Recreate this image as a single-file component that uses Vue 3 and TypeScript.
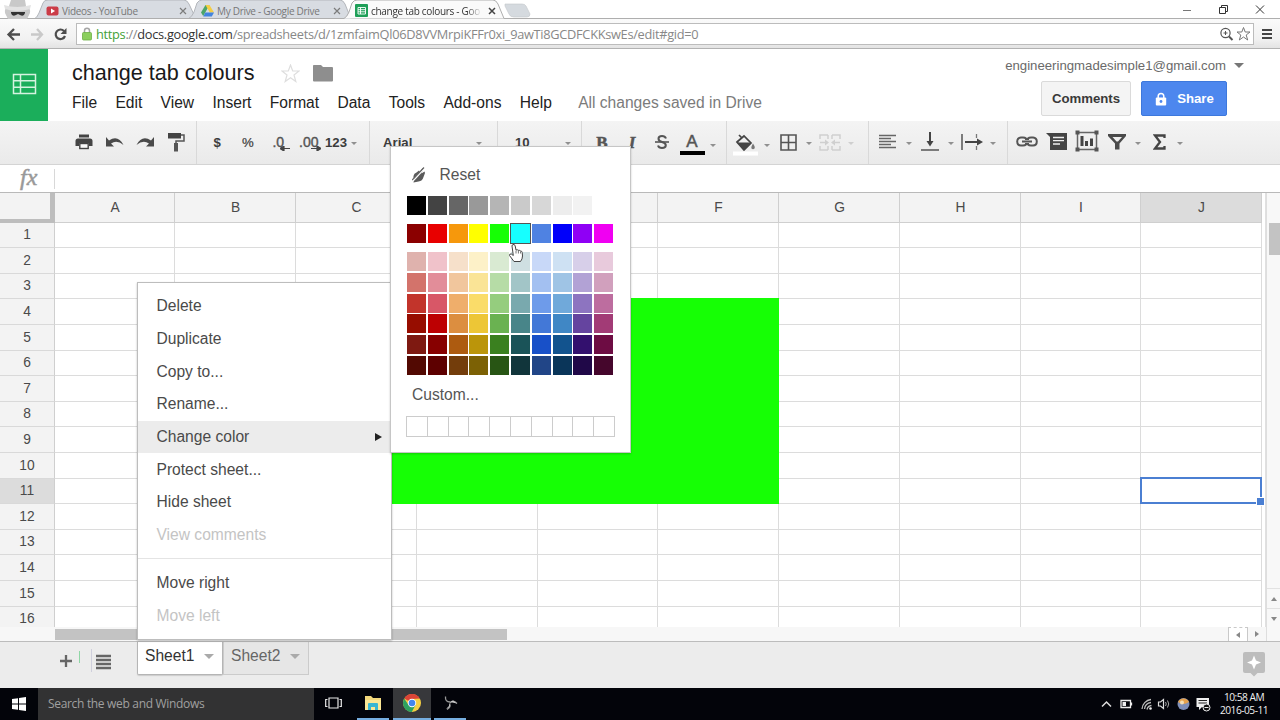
<script setup lang="ts">
interface MenuItem { label: string; disabled?: boolean; active?: boolean }

const menus = ['File', 'Edit', 'View', 'Insert', 'Format', 'Data', 'Tools', 'Add-ons', 'Help']
const columns = ['A', 'B', 'C', 'D', 'E', 'F', 'G', 'H', 'I', 'J']
const rows = Array.from({ length: 16 }, (_, i) => i + 1)

const isFilled = (r: number, c: number): boolean => r >= 4 && r <= 11 && c >= 2 && c <= 5

const firstItems: MenuItem[] = [
  { label: 'Delete' },
  { label: 'Duplicate' },
  { label: 'Copy to...' },
  { label: 'Rename...' },
  { label: 'Change color', active: true },
  { label: 'Protect sheet...' },
  { label: 'Hide sheet' },
  { label: 'View comments', disabled: true },
]
const lastItems: MenuItem[] = [{ label: 'Move right' }, { label: 'Move left', disabled: true }]

const palettes: string[][][] = [
  [['#000000', '#434343', '#666666', '#999999', '#b5b5b5', '#cacaca', '#d7d7d7', '#ededed', '#f2f2f2', '#ffffff']],
  [['#8b0000', '#e80000', '#f6980c', '#ffff00', '#16ff05', '#16ffff', '#4f82e2', '#0000fa', '#8f00f5', '#f000f2']],
  [
    ['#dfb2ad', '#f0c2ca', '#f6e0ca', '#fdf1c8', '#d9ead2', '#cfdfe2', '#c8d8f8', '#cee1f3', '#d7cfe9', '#e8cadc'],
    ['#d3736b', '#e28d99', '#f1c69d', '#fae496', '#b6dca6', '#a2c5c7', '#a3c0f1', '#9fc4e5', '#b2a2d5', '#d1a0bd'],
    ['#c2342b', '#d85767', '#efae6b', '#fadc69', '#95cd7e', '#79a9ae', '#6e9bea', '#70a9da', '#8d74c0', '#bd6d9f'],
    ['#970d00', '#bd0002', '#dc8e40', '#edc636', '#6ab251', '#488589', '#4378d7', '#4087c5', '#65449f', '#a23b76'],
    ['#7e1911', '#870000', '#ad5b10', '#bb950a', '#3a801f', '#1a5358', '#1850c8', '#12538e', '#33106e', '#6d0c43'],
    ['#520902', '#5d0000', '#733d0b', '#7c6105', '#285514', '#11353b', '#214587', '#0a3559', '#200848', '#45062c'],
  ],
]
const isHovered = (g: number, c: number): boolean => g === 1 && c === 5
</script>

<template>
  <div class="screen">
    <div class="tabstrip">
      <svg class="tabshapes" width="540" height="19">
        <path d="M34 19 Q37 18 39 13 L43 3 Q44 0 48 0 H184 Q187 0 189 4 L196 19Z" fill="#d8dce2" stroke="#b3b6bb" />
        <path d="M188 19 Q192 17 194 12 L197 3 Q199 0 202 0 H340 Q343 0 345 4 L351 19Z" fill="#d8dce2" stroke="#b3b6bb" />
        <path d="M505 4 H522 Q525 4 526 6 L530 14 Q530 17 527 17 H514 Q510 17 509 14 L505 6Z" fill="#d5dadf" stroke="#c3c6ca" stroke-width=".6" />
        <path d="M0 18.500H344 Q347 17 349 12 L352 3 Q354 0 357 0 H493 Q496 0 498 4 L504 18.500H540" fill="#fafafa" stroke="#aeaeae" />
        <path d="M11 0 H25 L26 6 Q31 8 30 13 L27 19 H8 L5 13 Q4 8 9 6Z" fill="#c9c9c9" />
        <path d="M4 5 Q17 9 31 5 L30 9 Q17 13 5 9Z" fill="#e3e3e3" />
        <path d="M11 12 H25 V13 Q24 17 20 15 L18 14 L16 15 Q12 17 11 13Z" fill="#333" />
      </svg>
      <div class="tab first">
        <svg width="13" height="10"><rect x=".500" y=".500" width="12" height="9" rx="2" fill="#cb3c48" /><path d="M5 2.500 9 5 5 7.500Z" fill="#fff" /></svg>
        <span>Videos - YouTube</span>
        <svg class="x" width="8" height="8"><path d="M1 1 7 7M7 1 1 7" stroke="#7c7c7c" stroke-width="1.200" /></svg>
      </div>
      <div class="tab second">
        <svg width="13" height="12"><path d="M4.500 0H8.500L4.300 7.500 2.200 11 0 7.500Z" fill="#4ba568" /><path d="M4.500 0H8.500L13 7.500H8.800Z" fill="#f4cd43" /><path d="M4.300 7.500H13L10.800 11.500H2.200Z" fill="#4384de" /></svg>
        <span>My Drive - Google Drive</span>
        <svg class="x" width="8" height="8"><path d="M1 1 7 7M7 1 1 7" stroke="#7c7c7c" stroke-width="1.200" /></svg>
      </div>
      <div class="tab third">
        <svg width="13" height="13"><rect width="13" height="13" rx="1" fill="#1f9f58" /><path d="M3 3.500H10.500V10H3ZM3 5.700H10.500M3 7.800H10.500M5.500 3.500V10" fill="none" stroke="#fff" stroke-width=".9" /></svg>
        <span class="fade">change tab colours - Goo</span>
        <svg class="x" width="8" height="8"><path d="M1 1 7 7M7 1 1 7" stroke="#444" stroke-width="1.500" /></svg>
      </div>
      <svg class="winctl" width="86" height="19">
        <path d="M5 10.500H13" stroke="#777" />
        <path d="M41.500 7.500H47.500V13.500H41.500ZM43.500 7.500V5.500H49.500V11.500H47.500" fill="none" stroke="#333" />
        <path d="M78 5.500 86 13.500M86 5.500 78 13.500" stroke="#333" />
      </svg>
    </div>

    <div class="addressbar">
      <svg class="nav" width="72" height="28">
        <path d="M20 14.500H9M14 9 8.500 14.500 14 20" fill="none" stroke="#4d4d4d" stroke-width="2.300" />
        <path d="M31 14.500H41M37 9 42 14.500 37 20" fill="none" stroke="#c9c9c9" stroke-width="2.300" />
        <path d="M64 11A4.800 4.800 0 1 0 65 16" fill="none" stroke="#4d4d4d" stroke-width="2.200" /><path d="M66.500 8V14H60.500Z" fill="#4d4d4d" />
      </svg>
      <div class="omnibox">
        <svg width="12" height="14"><path d="M3.500 6V3.800A2.500 2.500 0 0 1 8.500 3.800V6" fill="none" stroke="#a5a5a5" stroke-width="1.500" /><rect x="1.500" y="5.500" width="9" height="7.500" rx="1" fill="#8ccf5e" stroke="#6dae45" stroke-width=".8" /></svg>
        <span class="url"><i>https</i>://<b>docs.google.com</b>/spreadsheets/d/1zmfaimQl06D8VVMrpiKFFr0xi_9awTi8GCDFCKKswEs/edit#gid=0</span>
        <svg class="zoomstar" width="34" height="16">
          <circle cx="7.500" cy="7" r="4.600" fill="none" stroke="#555" stroke-width="1.200" /><path d="M11 10.500 14.500 14" stroke="#555" stroke-width="2" /><path d="M5.500 7H9.500M7.500 5V9" stroke="#555" />
          <path d="M25.500 1.500 27.200 6H32L28.200 9 29.700 14 25.500 11 21.300 14 22.800 9 19 6H23.800Z" fill="none" stroke="#777" />
        </svg>
      </div>
      <svg class="burger" width="12" height="12"><path d="M1 2H11M1 6H11M1 10H11" stroke="#444" stroke-width="2.100" /></svg>
    </div>

    <header class="dochead">
      <div class="logo"><svg width="25" height="22"><path d="M1.500 1.500H23.500V20.500H1.500ZM1.500 7.800H23.500M1.500 14.200H23.500M8.500 1.500V20.500" fill="none" stroke="#d5f3e0" stroke-width="1.500" /></svg></div>
      <div class="docmain">
        <div class="titlerow">
          <span class="title">change tab colours</span>
          <svg class="star" width="19" height="19"><path d="M9.500 1 11.700 7H18L13 11 14.800 17.500 9.500 13.700 4.200 17.500 6 11 1 7H7.300Z" fill="none" stroke="#dedede" stroke-width="1.200" /></svg>
          <svg class="folder" width="20" height="18"><path d="M0 1.500Q0 1 1 1H8L10 3H19Q20 3 20 4V16.500Q20 17.500 19 17.500H1Q0 17.500 0 16.500Z" fill="#8e8e8e" /></svg>
        </div>
        <nav class="menubar"><span v-for="m in menus" :key="m">{{ m }}</span><span class="saved">All changes saved in Drive</span></nav>
      </div>
      <div class="account">
        <div class="email">engineeringmadesimple1@gmail.com<em class="down" /></div>
        <div class="buttons">
          <div class="btn">Comments</div>
          <div class="btn share"><svg width="12" height="14"><path d="M3.200 6V4.200A2.700 2.700 0 0 1 8.800 4.200V6" fill="none" stroke="#fff" stroke-width="1.500" /><rect x=".8" y="5.500" width="10.400" height="8" rx="1" fill="#fff" /><circle cx="6" cy="9.500" r="1.400" fill="#4d87ee" /></svg>Share</div>
        </div>
      </div>
    </header>

    <div class="toolbar">
      <div class="group g1">
        <div class="slot"><svg width="18" height="16"><path d="M4 0.500H14V3.500H4ZM3 4.500H15Q17.500 4.500 17.500 7V12H14V9H4V12H.5V7Q.5 4.500 3 4.500Z" fill="#444" /><rect x="4.800" y="9.500" width="8.400" height="5" fill="#fafafa" stroke="#444" stroke-width="1.400" /></svg></div>
        <div class="slot"><svg width="20" height="12"><path d="M1 1V10.500H9L6 7.500Q12 3.500 18.500 9Q13-1.500 4 4.500Z" fill="#4a4a4a" /></svg></div>
        <div class="slot"><svg width="20" height="12"><path d="M19 1V10.500H11L14 7.500Q8 3.500 1.500 9Q7-1.500 16 4.500Z" fill="#4a4a4a" /></svg></div>
        <div class="slot"><svg width="18" height="20"><path d="M1 1H14V6.500H1Z" fill="#444" /><path d="M14 3H17V9H9V12" fill="none" stroke="#555" stroke-width="1.500" /><path d="M7 11H11V19.500H7Z" fill="#555" /></svg></div>
      </div>
      <div class="group g2">
        <div class="slot">$</div><div class="slot thin">%</div>
        <div class="slot dec"><span>.0</span><svg width="10" height="5"><path d="M10 2.500H3M4 0 0 2.500 4 5Z" fill="#444" stroke="#444" stroke-width="1.200" /></svg></div>
        <div class="slot dec"><span>.00</span><svg width="10" height="5"><path d="M0 2.500H7M6 0 10 2.500 6 5Z" fill="#444" stroke="#444" stroke-width="1.200" /></svg></div>
        <div class="num">123<em class="caret" /></div>
      </div>
      <div class="group g3"><span>Arial</span><em class="caret" /></div>
      <div class="group g4"><span>10</span><em class="caret" /></div>
      <div class="group g5">
        <div class="slot serif">B</div><div class="slot serif ital">I</div>
        <div class="slot"><svg width="16" height="16"><path d="M12 4.500Q11 2 8 2Q4.500 2 4.500 4.700Q4.500 7 8 8Q11.800 9 11.800 11.200Q11.800 14 8 14Q4.800 14 4 11.500" fill="none" stroke="#555" stroke-width="2" /><path d="M1 8H15" stroke="#555" stroke-width="1.600" /></svg></div>
        <div class="slot acolor"><span>A</span><u /></div>
        <em class="caret low" />
      </div>
      <div class="group g6">
        <div class="slot"><svg class="fillsvg" width="26" height="23"><path d="M6 2 9 5M4 9 11 3 18 10 11 17Z" fill="none" stroke="#444" stroke-width="1.700" /><path d="M4 9.500H18L11 17Z" fill="#444" /><path d="M20 10.500Q22.500 14 21.500 15.500Q20 17 18.500 15.500Q17.800 14 20 10.500Z" fill="#777" /><rect x="0" y="18.500" width="25" height="4" fill="#fff" /></svg></div><em class="caret low" />
        <div class="slot"><svg width="17" height="17"><path d="M1 1H16V16H1ZM1 8.500H16M8.500 1V16" fill="none" stroke="#555" stroke-width="1.600" /></svg></div><em class="caret" />
        <div class="slot"><svg width="22" height="17"><path d="M9 1H1V5M13 1H21V5M9 16H1V12M13 16H21V12M9 1V5M13 1V5M9 12V16M13 12V16M1 8.500H7M15 8.500H21" fill="none" stroke="#cfcfcf" stroke-width="1.500" /><path d="M6 5.500 10 8.500 6 11.500ZM16 5.500 12 8.500 16 11.500Z" fill="#cfcfcf" /></svg></div><em class="caret pale" />
      </div>
      <div class="group g7">
        <div class="slot"><svg width="18" height="16"><path d="M0 1.500H17M0 4.500H12M0 7.500H17M0 10.500H12M0 13.500H17" stroke="#666" stroke-width="1.500" /></svg></div><em class="caret" />
        <div class="slot"><svg width="20" height="20"><path d="M10 0V10" stroke="#444" stroke-width="2" /><path d="M6.500 9H13.500L10 14.500Z" fill="#444" /><path d="M1 18H19" stroke="#555" stroke-width="1.500" /></svg></div><em class="caret" />
        <div class="slot"><svg width="22" height="18"><path d="M1 1V17" stroke="#555" stroke-width="1.500" /><path d="M15.500 1V5M15.500 13V17" stroke="#777" stroke-width="1.300" /><path d="M4 9H17" stroke="#444" stroke-width="2" /><path d="M16 5.500 22 9 16 12.500Z" fill="#444" /></svg></div><em class="caret" />
      </div>
      <div class="group g8">
        <div class="slot"><svg width="22" height="12"><path d="M10 4V2.500Q9 1.500 7 1.500H5Q1.200 2 1.200 5.500Q1.200 9.500 5 9.500H7Q9 9.500 10 8.500V7M12 4V2.500Q13 1.500 15 1.500H17Q20.800 2 20.800 5.500Q20.800 9.500 17 9.500H15Q13 9.500 12 8.500V7M6 5.500H16" fill="none" stroke="#555" stroke-width="2" /></svg></div>
        <div class="slot up"><svg width="22" height="19"><path d="M0 1H21V18H4V5Z" fill="#444" /><path d="M7 5.500H18M7 8.700H18M7 12H14" stroke="#eee" stroke-width="1.300" /></svg></div>
        <div class="slot up"><svg width="24" height="22"><path d="M2.500 2.500H21.500V19.500H2.500Z" fill="none" stroke="#666" stroke-width="1.500" /><path d="M.5.500H4.500V4.500H.5ZM19.500.500H23.500V4.500H19.500ZM.5 17.500H4.500V21.500H.5ZM19.500 17.500H23.500V21.500H19.500Z" fill="#555" /><path d="M5.500 16V6H8.500V16ZM10 16V11H13V16ZM15 16V8.500H18V16Z" fill="#444" /></svg></div>
        <div class="slot"><svg width="18" height="16"><path d="M0 0H18V2L11.500 9.500V15.500H7V9.500L0 2ZM4.500 3 8.500 7.500H10L14 3Z" fill="#4a4a4a" fill-rule="evenodd" /></svg></div><em class="caret" />
        <div class="slot"><svg width="13" height="16"><path d="M11.500 4V1.500H2L7 8 2 14.500H11.500V12" fill="none" stroke="#444" stroke-width="2.300" /></svg></div><em class="caret" />
      </div>
    </div>

    <div class="formula"><span class="fx">fx</span><i /></div>

    <div class="sheet">
      <div class="gridwrap">
        <div class="grid">
          <div class="corner" />
          <div v-for="(c, i) in columns" :key="c" class="colhead" :class="{ sel: i === 9 }">{{ c }}</div>
          <template v-for="r in rows" :key="r">
            <div class="rowhead" :class="{ sel: r === 11 }">{{ r }}</div>
            <div v-for="(c, i) in columns" :key="c" class="cell" :class="{ fill: isFilled(r, i), cursor: r === 11 && i === 9 }"><i v-if="r === 11 && i === 9" /></div>
          </template>
        </div>
        <div class="hscroll">
          <div class="hthumb" />
          <div class="harrows"><span class="box"><em class="al" /></span><span><em class="ar" /></span></div>
        </div>
      </div>
      <div class="vscroll"><div class="vthumb" /><div class="varrows"><span><em class="au" /></span><span><em class="ad" /></span></div></div>
    </div>

    <div class="sheetbar">
      <svg class="plus" width="14" height="14"><path d="M7 1V13M1 7H13" stroke="#666" stroke-width="2.300" /></svg>
      <i class="g" /><i class="v" />
      <svg class="list" width="16" height="16"><path d="M0 2H15M0 6H15M0 10H15M0 14H15" stroke="#666" stroke-width="2.300" /></svg>
      <div class="stab on">Sheet1<em class="down" /></div>
      <div class="stab">Sheet2<em class="down" /></div>
      <svg class="explore" width="22" height="26"><path d="M2 1H20Q22 1 22 3V20Q22 22 20 22H14.500L11 25.500 7.500 22H2Q0 22 0 20V3Q0 1 2 1Z" fill="#bdbdbd" /><path d="M11 4.500 13 9.500 18 11.500 13 13.500 11 18.500 9 13.500 4 11.500 9 9.500Z" fill="#fff" /></svg>
    </div>

    <div class="taskbar">
      <div class="start"><svg width="14" height="14"><path d="M0 2 6 1.200V6.500H0ZM7 1 14 0V6.500H7ZM0 7.500H6V12.800L0 12ZM7 7.500H14V14L7 13Z" fill="#fff" /></svg></div>
      <div class="search">Search the web and Windows</div>
      <div class="app"><svg width="17" height="14"><path d="M4 2H13V12H4ZM2.500 3.500H.7V10.500H2.500M14.500 3.500H16.300V10.500H14.500" fill="none" stroke="#e8e8e8" stroke-width="1.200" /></svg></div>
      <div class="app run"><svg width="18" height="16"><path d="M1 1H7L9 3H17V15H1Z" fill="#f3d97d" /><path d="M1 5H17V15H1Z" fill="#fbe795" /><path d="M4 15V9Q4 8 5 8H13Q14 8 14 9V15H11V12H7V15Z" fill="#38b6d3" /></svg></div>
      <div class="app run cur"><svg width="18" height="18" viewBox="0 0 18 18"><circle cx="9" cy="9" r="9" fill="#f5cf43" /><path d="M9 9 1.200 4.500A9 9 0 0 1 16.800 4.500L9 5Z" fill="#db4437" /><path d="M1.200 4.500A9 9 0 0 0 8.800 18L12.500 11 9 9 5.500 11Z" fill="#2da160" /><circle cx="9" cy="9" r="4.200" fill="#fff" /><circle cx="9" cy="9" r="3.300" fill="#4386ee" /></svg></div>
      <div class="app run"><svg width="16" height="16"><path d="M8 7Q3 7 3.500 1.500M8 8Q11 4 15 8.500M7.500 8.500Q9.500 12 5 14.500" fill="none" stroke="#999" stroke-width="1.300" /><path d="M7.500 8.500Q9.500 12 4 14L7 11ZM8 7 11 5.500 15 8.500Z" fill="#ccc" /></svg></div>
      <div class="tray">
        <svg width="110" height="16">
          <path d="M1 10.500 5.500 6 10 10.500" fill="none" stroke="#ddd" stroke-width="1.500" />
          <path d="M20 4.500H29.500V11.500H20ZM30.500 6.500V9.500" fill="none" stroke="#eee" stroke-width="1.300" /><path d="M21.500 6H25V10H21.500Z" fill="#eee" />
          <path d="M41 13A10 10 0 0 1 50 3.500M43.500 13A7.500 7.500 0 0 1 50 6.500M46 13.500A5 5 0 0 1 50.500 9.500" fill="none" stroke="#bbb" stroke-width="1.300" /><circle cx="49.500" cy="12.500" r="1.300" fill="#eee" />
          <path d="M57.500 6H59.500L62.500 3.500V12.500L59.500 10H57.500Z" fill="none" stroke="#ddd" stroke-width="1.200" /><path d="M64.500 6Q66 8 64.500 10M66.500 4.500Q69 8 66.500 11.500" fill="none" stroke="#aaa" />
          <circle cx="82.500" cy="8" r="6" fill="#7f8fb8" /><path d="M77 6A6 6 0 0 1 88 6Q82 10 77 6Z" fill="#e7a24b" /><circle cx="81" cy="6.500" r="2" fill="#f4dfb5" />
          <path d="M95.500 2H108V11H101L98 14V11H95.500Z" fill="#eee" /><path d="M97.500 4.500H106M97.500 7H106" stroke="#222" /><circle cx="105.500" cy="11.500" r="3.500" fill="#111" stroke="#eee" /><path d="M103.500 11.500H107.500" stroke="#eee" />
        </svg>
        <div class="clock"><span>10:58 AM</span><span>2016-05-11</span></div>
      </div>
    </div>

    <div class="ctxmenu">
      <div v-for="m in firstItems" :key="m.label" class="item" :class="{ dis: m.disabled, act: m.active }">{{ m.label }}<em v-if="m.active" /></div>
      <hr>
      <div v-for="m in lastItems" :key="m.label" class="item" :class="{ dis: m.disabled }">{{ m.label }}</div>
    </div>

    <div class="picker">
      <div class="reset"><svg width="14" height="16"><path d="M1.500 15.500 1.500 9Q2 6 4.500 5.500L7 3.500 8 5 10.500 1 11.500 2 9.500 6.500 12.500 4.500 13 6 11.500 10Q10.500 14 6.500 14.500Z" fill="#5a5a5a" /><path d="M13 1 .5 14.500" stroke="#fff" stroke-width="1.300" /><path d="M12 .5 0 13" stroke="#666" stroke-width="1.200" /></svg>Reset</div>
      <div v-for="(p, g) in palettes" :key="g" class="palette">
        <template v-for="(line, l) in p" :key="l">
          <i v-for="(c, k) in line" :key="k" :class="{ hov: isHovered(g, k) }" :style="{ background: c }" />
        </template>
      </div>
      <div class="custom">Custom...</div>
      <div class="blank"><i v-for="n in 10" :key="n" /></div>
    </div>

    <svg class="pointer" width="16" height="21"><path d="M5 1.500Q6.800 1 7.200 3L8 7Q9.500 6.300 10.300 7.300Q11.800 6.800 12.300 8Q14 7.800 14.200 9.500L14.500 13Q14.500 16 12.500 18.500H6L1.500 12.500Q1.300 10.500 3.300 11L5.300 12.500 4 3Q4 1.800 5 1.500Z" fill="#fff" stroke="#444" stroke-width="1" /><path d="M8 7.500V10.500M10.400 7.500V10.500M12.500 8.500V10.500" stroke="#555" stroke-width=".8" /></svg>
  </div>
</template>

<style>
html, body { overflow: hidden; background: #fff; }
</style>
<style scoped>
* { box-sizing: border-box; }
i, em { font-style: normal; }
svg { display: block; flex: none; }
.screen { position: relative; width: 1280px; height: 720px; overflow: hidden; display: flex; flex-direction: column; font-family: "Liberation Sans", Arial, sans-serif; color: #222; background: #fff; }
.screen > div, .screen > header { flex: none; }

.tabstrip { height: 19px; position: relative; display: flex; border-bottom: 1px solid #aeaeae; font-family: "Open Sans", sans-serif; font-size: 10px; letter-spacing: -.3px; color: #777; }
.tabshapes { position: absolute; left: 0; top: 0; }
.tab { position: relative; display: flex; align-items: center; height: 21px; white-space: nowrap; }
.tab span { margin-left: 3px; }
.tab .x { margin-left: auto; }
.first { margin-left: 46px; width: 141px; }
.second { margin-left: 14px; width: 140px; }
.third { margin-left: 14px; width: 141px; color: #333; }
.third .fade { width: 111px; overflow: hidden; mask-image: linear-gradient(90deg, #000 86%, transparent); }
.winctl { margin-left: auto; margin-right: 16px; overflow: visible; }

.addressbar { height: 30px; display: flex; align-items: center; background: linear-gradient(#fafafa, #f1f1f1 70%, #e3e3e3); border-bottom: 1px solid #b2b2b2; }
.omnibox { height: 22px; margin-left: 4px; width: 1178px; border: 1px solid #bcbcbc; background: #fff; display: flex; align-items: center; padding-left: 4px; }
.nav { margin-top: 1px; }
.url { margin-left: 3px; font: 12.800px/20px "Open Sans", sans-serif; letter-spacing: -.3px; color: #888; white-space: nowrap; }
.url i { color: #43a035; }
.url b { font-weight: 400; color: #333; }
.zoomstar { margin-left: auto; margin-right: 1px; }
.burger { margin-left: 7px; }

.dochead { height: 72px; display: flex; }
.logo { width: 48px; background: #1bae5b; padding: 24px 0 0 12px; }
.docmain { padding-left: 24px; }
.titlerow { display: flex; align-items: center; height: 46px; padding-top: 2px; }
.title { font-size: 21.6px; color: #1a1a1a; width: 182px; white-space: nowrap; }
.star { margin-left: 27px; }
.folder { margin-left: 13px; }
.menubar { display: flex; gap: 18.300px; font-size: 15.600px; line-height: 18px; margin-top: -1px; white-space: nowrap; }
.menubar .saved { color: #7b7b7b; margin-left: 8px; }
.account { margin-left: auto; padding-right: 36px; }
.email { display: flex; align-items: center; justify-content: flex-end; gap: 8px; font-size: 13.200px; color: #6a6a6a; height: 32px; }
.down { border: 5px solid transparent; border-top-color: #777; border-bottom: 0; }
.buttons { display: flex; justify-content: flex-end; gap: 10px; padding-right: 17px; }
.btn { height: 35px; width: 90px; border: 1px solid #dadada; border-radius: 2px; background: #f4f4f4; color: #3a3a3a; font-weight: 700; font-size: 13.200px; display: flex; align-items: center; justify-content: center; }
.share { width: 86px; background: #4d87ee; border-color: #3d78dc; color: #fff; gap: 10px; padding-left: 1px; }

.toolbar { height: 44px; display: flex; background: linear-gradient(#f4f4f4, #eaeaea); border-bottom: 1px solid #d4d4d4; font-size: 13.200px; font-weight: 700; color: #3c3c3c; }
.group { display: flex; align-items: center; height: 43px; border-right: 1px solid #d9d9d9; flex: none; }
.slot { width: 30.500px; height: 30px; display: flex; align-items: center; justify-content: center; flex: none; }
.slot svg { margin-top: -1px; }
.caret { border: 3.500px solid transparent; border-top-color: #909090; border-bottom: 0; margin: 1px 3px 0; flex: none; }
.low { margin-top: 5px; }
.g1 { width: 197px; padding-left: 69px; }
.g2 { width: 173px; padding-left: 5px; }
.g3 { width: 128px; padding: 0 12px 0 13px; justify-content: space-between; }
.g4 { width: 84px; padding: 0 7px 0 17px; justify-content: space-between; }
.g5 { width: 145px; padding-left: 5px; }
.g6 { width: 142px; padding-left: 4px; }
.g7 { width: 139px; padding-left: 4px; }
.g8 { padding-left: 4px; border: 0; }
.g5 .slot { width: 30px; }
.g6 .slot, .g7 .slot, .g8 .slot { width: 30px; }
.g7 .slot svg { margin-top: -2px; }
.slot.up svg { margin-top: -3px; }
.thin { font-weight: 400; -webkit-text-stroke: .2px; }
.slot.dec { flex-direction: column; font-size: 14px; font-weight: 400; -webkit-text-stroke: .4px; line-height: 14px; color: #555; padding-top: 1px; }
.slot.dec svg { margin: -3px 0 0 14px; }
.num { display: flex; align-items: center; gap: 1px; padding-left: 1px; }
.slot.serif { font: 700 17px/20px "Liberation Serif", serif; color: #555; -webkit-text-stroke: .5px; }
.slot.ital { font-style: italic; }
.acolor { flex-direction: column; font-size: 17px; font-weight: 400; color: #555; -webkit-text-stroke: .5px; line-height: 16px; padding-top: 4px; }
.acolor u { width: 25px; height: 4px; background: #000; margin-top: 1px; }
.slot .fillsvg { margin-top: 3px; }
.pale { border-top-color: #cfcfcf; }

.formula { height: 28px; display: flex; align-items: center; border-bottom: 1px solid #b9b9b9; }
.fx { font: italic 400 24px/24px "Liberation Serif", serif; -webkit-text-stroke: .5px; color: #999; padding: 0 0 3px 20px; width: 54px; }
.formula i { width: 1px; height: 20px; background: #d8d8d8; }

.sheet { height: 449px; display: flex; border-bottom: 1px solid #bcbcbc; }
.gridwrap { width: 1266px; height: 448px; display: flex; flex-direction: column; }
.grid { height: 434px; overflow: hidden; display: grid; grid-template-columns: 55px 120px 121px 121px 121px 120px 121px 121px 121px 120px 121px; grid-template-rows: 30px 25px 26px 25px 26px 26px 25px 26px 25px 26px 26px 25px 26px 25px 26px 26px 25px; border-right: 1px solid #e0e0e0; }
.corner { background: #f3f3f3; border-right: 5px solid #bdbdbd; border-bottom: 4px solid #bdbdbd; }
.colhead, .rowhead { background: #f3f3f3; border-right: 1px solid #cfcfcf; border-bottom: 1px solid #cfcfcf; font-size: 13.800px; color: #4a4a4a; display: flex; align-items: center; justify-content: center; }
.colhead { padding-left: 1px; }
.rowhead { border-bottom-color: #d9d9d9; padding-bottom: 1px; }
.colhead.sel, .rowhead.sel { background: #dcdcdc; }
.cell { border-right: 1px solid #dcdcdc; border-bottom: 1px solid #dcdcdc; position: relative; }
.fill { background: #16ff05; border-color: #16ff05; box-shadow: 0 -1px #16ff05; }
.cursor { z-index: 1; }
.cursor::after { content: ""; position: absolute; inset: -2px -1px -1px; border: 2px solid #4b7fd2; }
.cursor i { position: absolute; right: -3px; bottom: -2px; width: 7px; height: 7px; background: #4b7fd2; outline: 1px solid #fff; z-index: 2; }
.hscroll { flex: 1; display: flex; justify-content: space-between; background: #f7f7f7; padding-left: 55px; }
.hthumb { width: 452px; height: 11px; margin-top: 2px; background: #c3c3c3; }
.harrows { display: flex; }
.harrows span, .varrows span { display: flex; align-items: center; justify-content: center; width: 18px; }
.harrows .box { width: 20px; border: 1px solid #c9c9c9; border-top-style: dashed; border-bottom: 0; background: #fff; }
.al, .ar, .au, .ad { border: 3px solid transparent; }
.al { border-right: 4px solid #888; border-left: 0; }
.ar { border-left: 4px solid #888; border-right: 0; }
.au { border-bottom: 4px solid #888; border-top: 0; }
.ad { border-top: 4px solid #888; border-bottom: 0; }
.vscroll { flex: 1; background: #f8f8f8; border-left: 1px solid #dedede; display: flex; flex-direction: column; justify-content: space-between; }
.vthumb { margin: 30px 0 0 2px; height: 32px; background: #c3c3c3; }
.varrows { padding-bottom: 13px; }
.varrows span { width: 13px; height: 20px; border-top: 1px solid #e2e2e2; }

.sheetbar { height: 46px; display: flex; background: #ececec; }
.plus { margin: 12px 0 0 59px; }
.sheetbar .g { width: 1px; height: 12px; background: #8fd6a5; margin: 9px 0 0 6px; }
.sheetbar .v { width: 1px; height: 23px; background: #cfcfdc; margin: 7px 0 0 11px; }
.list { margin: 12px 0 0 4px; }
.stab { height: 33px; width: 86px; border: 1px solid #cbcbcb; border-top: 0; background: #e6e6e6; color: #666; font-size: 15.600px; display: flex; align-items: center; gap: 10px; padding: 0 0 5px 7px; }
.stab .down { border-top-color: #aaa; margin-top: 2px; }
.on { background: #fff; color: #333; border-color: #b5b5b5; margin-left: 25px; border-radius: 0 0 2px 2px; box-shadow: 0 1px 1px #ccc; }
.explore { margin: 9px 15px 0 auto; }

.taskbar { height: 32px; display: flex; background: #03040a; font-family: "Open Sans", sans-serif; }
.start { width: 38px; display: flex; align-items: center; justify-content: center; }
.search { width: 276px; background: #323233; color: #a0a0a0; font-size: 12px; letter-spacing: -.32px; line-height: 32px; padding-left: 10px; }
.app { width: 38px; margin-right: 2px; display: flex; align-items: center; justify-content: center; border-bottom: 2px solid transparent; }
.run { width: 32px; margin: 0 4px 0 3px; border-bottom-color: #76aee0; }
.cur { width: 38px; margin: 0; background: #37383b; }
.tray { margin-left: auto; display: flex; align-items: center; }
.clock { display: flex; flex-direction: column; align-items: center; font-size: 10.200px; letter-spacing: -.5px; line-height: 13px; color: #f0f0f0; width: 58px; margin-left: 4px; margin-right: 7px; }

.ctxmenu { position: absolute; left: 137px; top: 282px; width: 255px; height: 358px; background: #fff; border: 1px solid #bdbdbd; box-shadow: 0 1px 2px rgba(0, 0, 0, .25); padding-top: 7px; font-size: 15.600px; color: #4a4a4a; }
.item { height: 32.700px; line-height: 34px; padding-left: 18.500px; display: flex; align-items: center; justify-content: space-between; }
.act { background: #ececec; }
.act em { border: 4px solid transparent; border-left: 7px solid #222; border-right: 0; margin-right: 9px; }
.dis { color: #c4c4c4; }
.ctxmenu hr { border: 0; border-top: 1px solid #e4e4e4; margin: 6px 0 8px; }

.picker { position: absolute; left: 390px; top: 146px; width: 241px; height: 307px; background: #fff; border: 1px solid #c6c6c6; box-shadow: 0 1px 2px rgba(0, 0, 0, .2); padding-left: 16px; font-size: 15.600px; color: #555; }
.reset { display: flex; align-items: center; height: 49px; padding: 6px 0 0 5px; gap: 13.500px; }
.palette { display: grid; grid-template-columns: repeat(10, 19px); grid-auto-rows: 19px; gap: 1.800px; margin-bottom: 9px; }
.hov { outline: 1px solid #555; }
.custom { padding-left: 5px; line-height: 20px; margin-top: 10px; }
.blank { display: flex; margin: 11px 0 0 -1px; width: 209px; border: 1px solid #ccc; height: 21px; }
.blank i { flex: 1; border-right: 1px solid #ccc; }
.blank i:last-child { border: 0; }
.pointer { position: absolute; left: 508px; top: 243px; }
</style>
